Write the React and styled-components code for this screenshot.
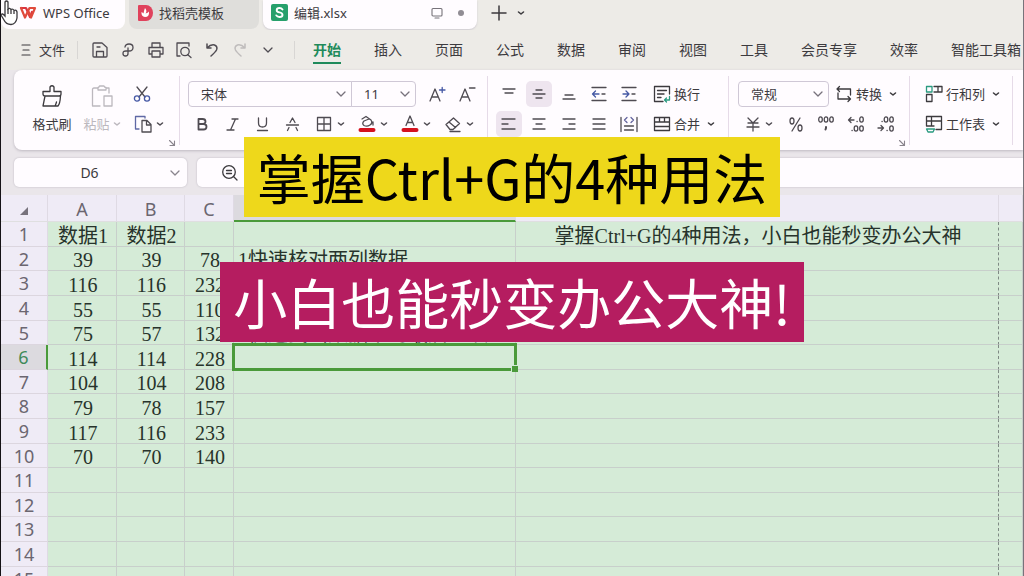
import React from "react"
import styled, { createGlobalStyle } from "styled-components"

const fonts = {
  ui: "'Noto Sans', 'Noto Sans CJK SC', sans-serif",
  cjk: "'Noto Sans CJK SC', sans-serif",
  cell: "'Liberation Serif', 'Noto Sans CJK SC', serif"
}

const colors = {
  frame: "#eae6ea",
  bar: "#edebe7",
  panel: "#fffcff",
  text: "#3c3a3e",
  icon: "#4f4b52",
  faded: "#bcb8be",
  line: "#e6dbe8",
  box: "#cfc8d6",
  green: "#1f8a5b",
  cell: "#d5ebd7",
  grid: "#c8cfcb",
  header: "#efebf6",
  headerOn: "#dcdadf",
  select: "#4a9a3a",
  yellow: "#eed81b",
  pink: "#b51d60"
}

const GlobalStyle = createGlobalStyle`
  body {
    margin: 0;
    overflow: hidden;
  }
  * {
    box-sizing: border-box;
  }
  button, input, select {
    margin: 0;
    padding: 0;
    border: 0;
    background: none;
    font: inherit;
    color: inherit;
    outline: none;
  }
`

const Window = styled.div`
  position: relative;
  display: flex;
  flex-direction: column;
  height: 100vh;
  overflow: hidden;
  border-left: 1px solid #151216;
  border-right: 1px solid #77737a;
  background: ${colors.frame};
  color: ${colors.text};
  font-family: ${fonts.ui};
  font-size: 13px;
  line-height: 18px;
`

const TabBar = styled.div`
  display: flex;
  height: 30px;
  flex-shrink: 0;
  background: ${colors.bar};
`

const Tab = styled.button`
  display: flex;
  align-items: center;
  gap: 6px;
  width: ${(p) => p.$width}px;
  height: 29px;
  margin-right: 4px;
  padding: 0 8px 4px;
  border-radius: 0 0 8px 8px;
  background: ${(p) => (p.$muted ? "#dfdedb" : colors.panel)};
  box-shadow: ${(p) => (p.$active ? "0 1px 2px #cfcbd1" : "none")};
  white-space: nowrap;
`

const HomeTab = styled(Tab)`
  padding-left: 18px;
`

const TabTools = styled.span`
  display: flex;
  align-items: center;
  gap: 14px;
  margin-left: auto;
  padding-right: 4px;
`

const NewTab = styled.button`
  display: flex;
  align-items: center;
  gap: 10px;
  padding: 0 10px 4px;
`

const MenuBar = styled.div`
  display: flex;
  align-items: center;
  height: 40px;
  flex-shrink: 0;
  padding-left: 20px;
  background: ${colors.bar};
  white-space: nowrap;
`

const QuickButton = styled.button`
  display: flex;
  align-items: center;
  justify-content: center;
  width: 28px;
  height: 28px;
  color: ${(p) => (p.$off ? "#bfbcbc" : colors.icon)};
`

const FileButton = styled.button`
  display: flex;
  align-items: center;
  gap: 7px;
`

const Divider = styled.span`
  width: 1px;
  height: 18px;
  margin: 0 8px 0 12px;
  background: #d8d6d4;
`

const Menu = styled.nav`
  display: flex;
  gap: 33px;
  margin-left: 10px;
`

const MenuItem = styled.a`
  padding: 4px 0;
  border-bottom: 2px solid ${(p) => (p.$active ? colors.green : "transparent")};
  color: ${(p) => (p.$active ? colors.green : colors.text)};
  font-family: ${fonts.cjk};
  font-size: 14px;
  font-weight: ${(p) => (p.$active ? 700 : 400)};
  text-decoration: none;
`

const Ribbon = styled.div`
  display: flex;
  height: 80px;
  flex-shrink: 0;
  margin-left: 13px;
  padding: 6px 0 5px;
  border-radius: 8px 0 0 8px;
  background: ${colors.panel};
  box-shadow: 0 1px 3px #bdb8c0;
  white-space: nowrap;
`

const Group = styled.div`
  position: relative;
  display: flex;
  flex-direction: column;
  flex-shrink: 0;
  width: ${(p) => p.$width}px;
  padding: 3px 0 0 ${(p) => p.$pad}px;
  border-right: 1px solid ${colors.line};
`

const ClipGroup = styled(Group)`
  flex-direction: row;
`

const Row = styled.div`
  display: flex;
  align-items: center;
  height: 30px;
`

const BigTool = styled.button`
  display: flex;
  flex-direction: column;
  align-items: center;
  width: 50px;
  color: ${(p) => (p.$off ? colors.faded : colors.text)};

  > svg {
    margin: 5px 0 7px;
  }
`

const BigLabel = styled.span`
  display: flex;
  align-items: center;
  gap: 3px;
`

const Tool = styled.button`
  display: flex;
  align-items: center;
  justify-content: center;
  width: 26px;
  height: 26px;
  margin: 0 2px;
  border-radius: 5px;
  background: ${(p) => (p.$on ? "#eee5ef" : "none")};
  color: ${colors.icon};
`

const SplitTool = styled.button`
  display: flex;
  align-items: center;
  gap: 4px;
  width: 43px;
  height: 26px;
  padding-left: 7px;
  color: ${colors.icon};
`

const TextTool = styled.button`
  display: flex;
  align-items: center;
  gap: 3px;
  height: 26px;
  margin-left: ${(p) => p.$space || 0}px;
  color: ${colors.text};

  svg + svg {
    margin-left: 4px;
  }
`

const FontSizes = styled.div`
  display: flex;
  margin-left: 6px;
`

const SelectBox = styled.span`
  display: flex;
  align-items: center;
  width: ${(p) => p.$width}px;
  height: 26px;
  padding-right: 4px;
  border: 1px solid ${colors.box};
  border-radius: ${(p) => p.$radius || "4px"};
  margin-left: ${(p) => (p.$joined ? "-1px" : 0)};
  color: #77727c;

  select {
    flex: 1;
    min-width: 0;
    padding-left: 12px;
    appearance: none;
    color: ${colors.text};
  }

  svg {
    pointer-events: none;
  }
`

const Launcher = styled.button`
  position: absolute;
  right: 3px;
  bottom: -2px;
  display: flex;
  color: #8a858d;
`

const FormulaBar = styled.div`
  display: flex;
  gap: 10px;
  flex-shrink: 0;
  height: 45px;
  padding: 8px 0 8px 13px;
`

const NameBox = styled.div`
  display: flex;
  align-items: center;
  width: 173px;
  padding-right: 6px;
  border-radius: 5px;
  background: ${colors.panel};
  box-shadow: 0 0 2px #b9b4bd;
  color: #8a858d;

  input {
    flex: 1;
    min-width: 0;
    padding-right: 4px;
    color: ${colors.text};
    font-size: 14px;
    text-align: center;
  }
`

const FormulaBox = styled.div`
  display: flex;
  align-items: center;
  flex: 1;
  padding-left: 24px;
  border-radius: 5px 0 0 5px;
  background: ${colors.panel};
  box-shadow: 0 0 2px #b9b4bd;

  input {
    flex: 1;
  }
`

const Sheet = styled.table`
  width: 100%;
  flex-shrink: 0;
  table-layout: fixed;
  border-spacing: 0;
  background: ${colors.header};
`

const ColHead = styled.th`
  height: 27px;
  padding: 2px 0 0;
  border-right: 1px solid #dfdae4;
  border-bottom: ${(p) => (p.$on ? `2px solid ${colors.select}` : "1px solid #dfdfe0")};
  background: ${(p) => (p.$on ? colors.headerOn : colors.header)};
  color: #6b6670;
  font-size: 18px;
  font-weight: 400;
  line-height: 20px;
`

const SheetRow = styled.tr`
  height: 25px;

  /* rows average a little under 25px */
  &:nth-child(5n + 2),
  &:nth-child(5n) {
    height: 24px;
  }
`

const RowHead = styled.th`
  padding: 0;
  border-right: ${(p) => (p.$on ? `2px solid ${colors.select}` : "1px solid #dfdae4")};
  border-bottom: 1px solid #dcd6df;
  background: ${(p) => (p.$on ? colors.headerOn : colors.header)};
  color: ${(p) => (p.$on ? "#3f8a5a" : "#6b6670")};
  font-size: 18px;
  font-weight: 400;
  line-height: 20px;
`

const Cell = styled.td`
  position: relative;
  padding: 3px 0 0 ${(p) => (p.$left ? 4 : 2)}px;
  border-right: 1px ${(p) => (p.$page ? "dashed #7f8a84" : `solid ${colors.grid}`)};
  border-bottom: 1px solid ${colors.grid};
  background: ${colors.cell};
  color: #27332b;
  font-family: ${fonts.cell};
  font-size: 20px;
  line-height: 20px;
  text-align: ${(p) => (p.$left ? "left" : "center")};
  white-space: nowrap;
`

const Selection = styled.span`
  position: absolute;
  z-index: 1;
  inset: -2px;
  border: 3px solid ${colors.select};

  &::after {
    content: "";
    position: absolute;
    right: -4px;
    bottom: -4px;
    width: 6px;
    height: 6px;
    border-top: 1px solid ${colors.cell};
    border-left: 1px solid ${colors.cell};
    background: ${colors.select};
  }
`

const Captions = styled.div`
  position: absolute;
  z-index: 2;
  top: 137px;
  left: 0;
  right: 0;
  display: flex;
  flex-direction: column;
  align-items: center;
  gap: 45px;
  pointer-events: none;
`

const Caption = styled.p`
  margin: 0;
  padding: 0 13px;
  background: ${(p) => (p.$pink ? colors.pink : colors.yellow)};
  color: ${(p) => (p.$pink ? "white" : "black")};
  font-family: ${fonts.cjk};
  font-size: 54px;
  line-height: 80px;
  white-space: nowrap;
`

const Pointer = styled.svg`
  position: absolute;
  z-index: 3;
  top: 0;
  left: 0;
`

function Icon({ w = 18, h = 18, sw = 1.3, children }) {
  return (
    <svg
      width={w}
      height={h}
      viewBox={`0 0 ${w} ${h}`}
      fill="none"
      stroke="currentColor"
      strokeWidth={sw}
      strokeLinecap="round"
      strokeLinejoin="round"
      aria-hidden="true"
    >
      {children}
    </svg>
  )
}

const Arrow = () => (
  <Icon w={8} h={6} sw={1.6}>
    <path d="M1.5 2 L4 4 L6.5 2" />
  </Icon>
)

const WideArrow = () => (
  <Icon w={12} h={8}>
    <path d="M2 2 L6 6 L10 2" />
  </Icon>
)

const Corner = () => (
  <Icon w={8} h={8} sw={1.1}>
    <path d="M1.5 1.5 L6 6 M6.5 2 V6.5 H2" />
  </Icon>
)

// horizontal strokes: [x1, x2, y]
const Lines = ({ rows }) => (
  <Icon>
    {rows.map(([a, b, y]) => (
      <path key={y} d={`M${a} ${y} H${b}`} />
    ))}
  </Icon>
)

const alignTop = [
  { name: "顶端对齐", rows: [[3, 15, 4], [5, 13, 8]] },
  { name: "垂直居中", rows: [[6, 12, 5], [3, 15, 9], [6, 12, 13]], on: true },
  { name: "底端对齐", rows: [[5, 13, 10], [3, 15, 14]] }
]

const alignSide = [
  { name: "左对齐", rows: [[2, 15, 4], [2, 8, 9], [2, 15, 14]], on: true },
  { name: "水平居中", rows: [[3, 15, 4], [6, 12, 9], [3, 15, 14]] },
  { name: "右对齐", rows: [[3, 15, 4], [9, 15, 9], [3, 15, 14]] },
  { name: "两端对齐", rows: [[3, 15, 4], [3, 15, 9], [3, 15, 14]] }
]

const menus = ["开始", "插入", "页面", "公式", "数据", "审阅", "视图", "工具", "会员专享", "效率", "智能工具箱"]

const columns = ["A", "B", "C", "D", "E", "F"]

const widths = [47, 69, 68, 49, 282, 483]

const data = [
  ["数据1", "数据2", "", "", "掌握Ctrl+G的4种用法，小白也能秒变办公大神"],
  [39, 39, 78, "1快速核对两列数据"],
  [116, 116, 232],
  [55, 55, 110],
  [75, 57, 132, "4快速找出数据中的最后一项"],
  [114, 114, 228],
  [104, 104, 208],
  [79, 78, 157],
  [117, 116, 233],
  [70, 70, 140],
  [],
  [],
  [],
  [],
  []
]

function Tabs() {
  return (
    <TabBar>
      <HomeTab $width={124}>
        <Icon w={18} h={16} sw={2.2}>
          <path d="M2 3 H7 L11 12 L13 7" stroke="#d9333f" />
          <path d="M2 3 L6 12.5 L10.5 3 H16 L12 12.5 L9.5 6.5" stroke="#e04a3c" />
        </Icon>
        WPS Office
      </HomeTab>
      <Tab $width={130} $muted>
        <Icon w={16} h={18}>
          <path d="M2 1 H9 A7 8 0 0 1 9 17 H2 Q1 17 1 16 V2 Q1 1 2 1 Z" fill="#e0425c" stroke="none" />
          <path d="M8 4 Q10.5 7 8.5 9.5 Q11 9 12 7.5 Q12.5 13 8 13 Q4 12.5 4.500 8 Q6 8.5 6.5 9.5 Q7 6 8 4 Z" fill="#fff" stroke="none" />
        </Icon>
        找稻壳模板
      </Tab>
      <Tab $width={214} $active>
        <Icon w={17} h={17} sw={1.9}>
          <rect width="17" height="17" rx="2" fill="#27a06c" stroke="none" />
          <path d="M11.5 5.5 Q10.5 4 8.5 4 Q5.7 4 5.7 6.2 Q5.7 8 8.5 8.4 Q11.5 8.9 11.5 10.9 Q11.5 13 8.5 13 Q6.2 13 5.3 11.4" stroke="#fff" />
        </Icon>
        编辑.xlsx
        <TabTools>
          <Icon w={12} h={12} sw={1.1}>
            <rect x="1" y="1.5" width="10" height="7.5" rx="1" stroke="#77737a" />
            <path d="M4 11 H8" stroke="#77737a" />
          </Icon>
          <Icon w={8} h={8}>
            <circle cx="4" cy="4" r="3" fill="#918d94" stroke="none" />
          </Icon>
        </TabTools>
      </Tab>
      <NewTab aria-label="新建">
        <Icon w={16} h={16} sw={1.5}>
          <path d="M8 1 V15 M1 8 H15" />
        </Icon>
        <Arrow />
      </NewTab>
    </TabBar>
  )
}

function MenuRow() {
  return (
    <MenuBar>
      <FileButton>
        <Icon w={11} h={14} sw={1.2}>
          <path d="M1 2 H9 M2 7 H8 M1 12 H9" />
        </Icon>
        文件
      </FileButton>
      <Divider />
      <QuickButton aria-label="保存">
        <Icon>
          <path d="M3 2 H11 L16 6.5 V15 Q16 16 15 16 H3 Q2 16 2 15 V3 Q2 2 3 2 Z M5.5 16 V10.5 H12.5 V16 M6 6 H9" />
        </Icon>
      </QuickButton>
      <QuickButton aria-label="输出">
        <Icon>
          <path d="M6 6 Q6.5 3 10 3 Q14 3 14 6.5 Q14 10 10 10 H7 Q4 10 4 12.5 Q4 15 6.5 15 Q9 15 9 12.5 V7" />
        </Icon>
      </QuickButton>
      <QuickButton aria-label="打印">
        <Icon>
          <path d="M5 6 V2 H13 V6 M5 13 H2 V6.5 H16 V13 H13 M5 10 H13 V16 H5 Z" />
        </Icon>
      </QuickButton>
      <QuickButton aria-label="打印预览">
        <Icon>
          <path d="M14 5 V2 H2 V15 H5 M12.5 13.5 L16 16.5" />
          <circle cx="10" cy="10.5" r="4.2" />
        </Icon>
      </QuickButton>
      <QuickButton aria-label="撤销">
        <Icon sw={1.5}>
          <path d="M4 3 V7 H8 M4 7 Q8 3 11.5 4 Q15 5.5 13.5 9 Q12.5 11 8 15" />
        </Icon>
      </QuickButton>
      <QuickButton aria-label="恢复" $off>
        <Icon sw={1.5}>
          <path d="M14 3 V7 H10 M14 7 Q10 3 6.5 4 Q3 5.5 4.5 9 Q5.5 11 10 15" />
        </Icon>
      </QuickButton>
      <QuickButton aria-label="更多">
        <WideArrow />
      </QuickButton>
      <Divider />
      <Menu>
        {menus.map((name, i) => (
          <MenuItem key={name} href="#" $active={i === 0}>
            {name}
          </MenuItem>
        ))}
      </Menu>
    </MenuBar>
  )
}

function ClipboardTools() {
  return (
    <ClipGroup $width={166} $pad={13}>
      <BigTool>
        <Icon w={22} h={24}>
          <path d="M2 10 V7.5 H9 V3 Q11 0.5 13 3 V7.5 H20 V10 Q20 12 18 12 H4 Q2 12 2 10 Z M4 12 L2 22 H17 Q19 20 19.5 12 M14 22 Q15 20 15.5 18" />
        </Icon>
        格式刷
      </BigTool>
      <BigTool $off>
        <Icon w={22} h={24}>
          <path d="M7 4 H3 Q1.5 4 1.5 5.5 V22 H9 M15 4 H18 V9 M7 6 V3.5 Q8 3.5 8.5 2 H13 Q13.5 3.5 15 3.5 V6 Z M13 12 H21 V22 H13 Z" />
        </Icon>
        <BigLabel>
          粘贴
          <Arrow />
        </BigLabel>
      </BigTool>
      <div>
        <Row>
          <Tool aria-label="剪切">
            <Icon>
              <path d="M4 2 L12 12 M14 2 L6 12" />
              <circle cx="4" cy="13.5" r="2.6" stroke="#4659a5" />
              <circle cx="14" cy="13.5" r="2.6" stroke="#4659a5" />
            </Icon>
          </Tool>
        </Row>
        <Row>
          <SplitTool aria-label="复制">
            <Icon>
              <path d="M5 14 H1.5 V1.5 H11 V3" stroke="#5f68a5" />
              <path d="M8 5.5 H13 L17 9.5 V17 H8 Z M12.5 6 V10 H17" />
            </Icon>
            <Arrow />
          </SplitTool>
        </Row>
      </div>
      <Launcher aria-label="剪贴板设置">
        <Corner />
      </Launcher>
    </ClipGroup>
  )
}

function FontTools() {
  return (
    <Group $width={308} $pad={8}>
      <Row>
        <SelectBox $width={164} $radius="4px 0 0 4px">
          <select aria-label="字体">
            <option>宋体</option>
          </select>
          <WideArrow />
        </SelectBox>
        <SelectBox $width={65} $radius="0 4px 4px 0" $joined>
          <select aria-label="字号">
            <option>11</option>
          </select>
          <WideArrow />
        </SelectBox>
        <FontSizes>
          <Tool aria-label="增大字号">
            <Icon>
              <path d="M2 16 L7 4 L12 16 M4 12 H10" />
              <path d="M11.5 5 H17 M14.2 2.5 V7.5" stroke="#4659a5" />
            </Icon>
          </Tool>
          <Tool aria-label="减小字号">
            <Icon>
              <path d="M2 16 L7 4 L12 16 M4 12 H10 M11.5 3 H17" />
            </Icon>
          </Tool>
        </FontSizes>
      </Row>
      <Row>
        <Tool aria-label="加粗">
          <Icon sw={1.8}>
            <path d="M4.500 4 H8.5 Q11.5 4 11.5 6.5 Q11.5 9 8.5 9 H4.5 Z M4.5 9 H9.5 Q12.5 9 12.5 11.7 Q12.5 14.5 9.5 14.5 H4.5 Z" />
          </Icon>
        </Tool>
        <Tool aria-label="倾斜">
          <Icon>
            <path d="M8 4 H14 M3 15 H10 M11.5 4 L6.5 15" />
          </Icon>
        </Tool>
        <Tool aria-label="下划线">
          <Icon>
            <path d="M4.5 3 V8 Q4.5 12 8.5 12 Q12.5 12 12.5 8 V3 M3.5 15.5 H13.5" />
          </Icon>
        </Tool>
        <Tool aria-label="删除线">
          <Icon>
            <path d="M2.5 10 H14.5 M6 7.5 L8.5 3 L11 7.5 M5 12.5 L3.5 15.5 M12 12.5 L13.5 15.5" />
          </Icon>
        </Tool>
        <SplitTool aria-label="边框">
          <Icon>
            <path d="M2.5 2.5 H15.5 V15.5 H2.5 Z M9 2.5 V15.5 M2.5 9 H15.5" />
          </Icon>
          <Arrow />
        </SplitTool>
        <SplitTool aria-label="填充颜色">
          <Icon>
            <path d="M4 4 L8 1.5 L13 5 Q15 8 12 10 Q9 12 6 10.5 Q3.5 8.5 6 6 L11 4 M15 7 V10" />
            <path d="M2.5 15 H15.5" stroke="#d4121f" strokeWidth="4" />
          </Icon>
          <Arrow />
        </SplitTool>
        <SplitTool aria-label="字体颜色">
          <Icon>
            <path d="M5 10.5 L9 1 L13 10.5 M6.5 7.5 H11.5" />
            <path d="M2.5 15 H15.5" stroke="#d4121f" strokeWidth="4" />
          </Icon>
          <Arrow />
        </SplitTool>
        <SplitTool aria-label="清除">
          <Icon>
            <path d="M2 9.5 L9.5 3 L15.5 8.5 L9 14.5 H6 Z M5 7 L11.5 12.5 M6 16.5 H16" />
          </Icon>
          <Arrow />
        </SplitTool>
      </Row>
    </Group>
  )
}

function AlignTools() {
  return (
    <Group $width={241} $pad={6}>
      <Row>
        {alignTop.map((item) => (
          <Tool key={item.name} aria-label={item.name} $on={item.on}>
            <Lines rows={item.rows} />
          </Tool>
        ))}
        <Tool aria-label="减少缩进">
          <Icon>
            <path d="M2 2.5 H16 M2 15.5 H16 M12 9 H15" />
            <path d="M9 9 H2.5 M5.5 6 L2.5 9 L5.5 12" stroke="#4659a5" />
          </Icon>
        </Tool>
        <Tool aria-label="增加缩进">
          <Icon>
            <path d="M2 2.5 H16 M2 15.5 H16 M12 9 H15" />
            <path d="M3 9 H9 M6 6 L9 9 L6 12" stroke="#4659a5" />
          </Icon>
        </Tool>
        <TextTool $space={9}>
          <Icon>
            <path d="M10 16.5 H1.5 V1.5 H16.5 V9 M4.5 5.5 H13.5 M4.5 9 H11 M4.5 12.5 H8" />
            <path d="M16.5 11.5 V15 H11.5 M13.5 13 L11.5 15 L13.5 17" stroke="#2a9a80" />
          </Icon>
          换行
        </TextTool>
      </Row>
      <Row>
        {alignSide.map((item) => (
          <Tool key={item.name} aria-label={item.name} $on={item.on}>
            <Lines rows={item.rows} />
          </Tool>
        ))}
        <Tool aria-label="分散对齐">
          <Icon>
            <path d="M1 2.5 V16.5 M17 2.5 V16.5 M4.5 11 H13.5 M4.5 15 H13.5" />
            <path d="M7 2.5 L4.5 5 L7 7.5 M11 2.5 L13.5 5 L11 7.5" stroke="#65659f" />
          </Icon>
        </Tool>
        <TextTool $space={9}>
          <Icon>
            <path d="M1.5 2.5 H16.5 V15.5 H1.5 Z M1.5 7 H16.5 M6.5 2.5 V7 M11.5 2.5 V7 M1.5 11.5 H16.5" />
          </Icon>
          合并
          <Arrow />
        </TextTool>
      </Row>
    </Group>
  )
}

const zero = (x, y) => <ellipse key={`${x}-${y}`} cx={x} cy={y} rx="1.8" ry="2.6" />

function NumberTools() {
  return (
    <Group $width={181} $pad={9}>
      <Row>
        <SelectBox $width={91}>
          <select aria-label="数字格式">
            <option>常规</option>
          </select>
          <WideArrow />
        </SelectBox>
        <TextTool $space={6}>
          <Icon>
            <path d="M4.5 1.5 L2 4 L4.5 6.5 M2 4 H15.5 V10 M13 11.5 L15.5 14 L13 16.5 M15.5 14 H3 V8" />
          </Icon>
          转换
          <Arrow />
        </TextTool>
      </Row>
      <Row>
        <SplitTool aria-label="货币">
          <Icon w={16} h={18}>
            <path d="M3 3 L8 8 L13 3 M3 8 H13 M2 12 H14 M8 8 V16" />
          </Icon>
          <Arrow />
        </SplitTool>
        <Tool aria-label="百分比">
          <Icon>
            <ellipse cx="5" cy="6" rx="2" ry="3" />
            <ellipse cx="13" cy="13" rx="2" ry="3" />
            <path d="M13 3 L5 16" />
          </Icon>
        </Tool>
        <Tool aria-label="千位分隔">
          <Icon>
            {[3.5, 9, 14.5].map((x) => zero(x, 4.5))}
            <path d="M9 12 V13 L8.5 14.5" strokeWidth="2" />
          </Icon>
        </Tool>
        <Tool aria-label="增加小数位">
          <Icon>
            {zero(14.5, 4.5)}
            {zero(9, 13.5)}
            {zero(14.5, 13.5)}
            <path d="M7 5 H1.5 M4 2.5 L1.5 5 L4 7.5 M10 6.5 H10.2 M5 15.5 H5.2" />
          </Icon>
        </Tool>
        <Tool aria-label="减少小数位">
          <Icon>
            {zero(9, 4.5)}
            {zero(14.5, 4.5)}
            {zero(14.5, 13.5)}
            <path d="M1 13 H6.5 M4 10.5 L6.5 13 L4 15.5 M5 6.5 H5.2 M10 15.5 H10.2" />
          </Icon>
        </Tool>
      </Row>
      <Launcher aria-label="数字格式设置">
        <Corner />
      </Launcher>
    </Group>
  )
}

function CellTools() {
  return (
    <Group $width={103} $pad={15}>
      <Row>
        <TextTool>
          <Icon>
            <path d="M1.5 1.5 H7 V7 H1.5 Z" stroke="#2a9a80" />
            <path d="M9 1.5 H17 V7 H9 M13 1.5 V7 M1.5 9.5 H7 V16.5 H1.5 Z" />
          </Icon>
          行和列
          <Arrow />
        </TextTool>
      </Row>
      <Row>
        <TextTool>
          <Icon>
            <path d="M1.5 11 V1.5 H16.5 V14.5 H11 M1.5 6 H16.5 M6.5 1.5 V11 M1.5 11 H9" />
            <path d="M1.5 14 H9.5 L8 17 H3 Z" stroke="#2a9a80" />
          </Icon>
          工作表
          <Arrow />
        </TextTool>
      </Row>
    </Group>
  )
}

function Grid() {
  return (
    <Sheet>
      <colgroup>
        {widths.map((w, i) => (
          <col key={i} width={w} />
        ))}
        <col />
      </colgroup>
      <thead>
        <tr>
          <ColHead aria-label="全选">
            <Icon w={10} h={10}>
              <path d="M9 1 V9 H1 Z" fill="#77727c" stroke="none" />
            </Icon>
          </ColHead>
          {columns.map((name) => (
            <ColHead key={name} aria-label={name} $on={name === "D"}>
              {name < "D" ? name : ""}
            </ColHead>
          ))}
        </tr>
      </thead>
      <tbody>
        {data.map((row, r) => (
          <SheetRow key={r}>
            <RowHead $on={r === 5}>{r + 1}</RowHead>
            {columns.map((name, c) => (
              <Cell key={name} $left={name === "D"} $page={name === "E"}>
                {row[c]}
                {r === 5 && name === "D" && <Selection />}
              </Cell>
            ))}
          </SheetRow>
        ))}
      </tbody>
    </Sheet>
  )
}

export default function App() {
  return (
    <>
      <GlobalStyle />
      <Window>
        <Tabs />
        <MenuRow />
        <Ribbon>
          <ClipboardTools />
          <FontTools />
          <AlignTools />
          <NumberTools />
          <CellTools />
        </Ribbon>
        <FormulaBar>
          <NameBox>
            <input aria-label="名称框" defaultValue="D6" />
            <WideArrow />
          </NameBox>
          <FormulaBox>
            <Icon>
              <circle cx="8" cy="8" r="6.3" />
              <path d="M12.5 12.5 L16 16 M5.5 6.5 H10.5 M5.5 9.5 H10.5" />
            </Icon>
            <input aria-label="编辑栏" />
          </FormulaBox>
        </FormulaBar>
        <Grid />
        <Captions>
          <Caption>掌握Ctrl+G的4种用法</Caption>
          <Caption $pink>小白也能秒变办公大神!</Caption>
        </Captions>
        <Pointer width="20" height="26" viewBox="0 0 20 26" fill="#fff" stroke="#3c3a3e" strokeWidth="1.3">
          <path d="M4 14 V2 Q5.5 0 7 2 V9 Q8.5 7.5 10 9.5 Q12 8.5 13 10.5 Q15.5 9.5 16 12 V18 Q15 24 10 24.5 Q5 24.5 3 20 L0 15 Q1 12.5 4 16 Z" />
          <path d="M7 9 V14 M10 10 V14 M13 11 V14" />
        </Pointer>
      </Window>
    </>
  )
}
